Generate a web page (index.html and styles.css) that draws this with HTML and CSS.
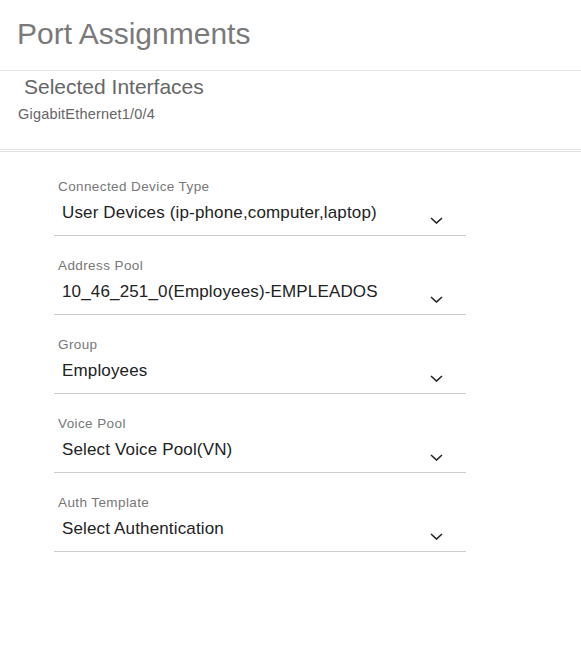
FILE: index.html
```html
<!DOCTYPE html>
<html lang="en">
<head>
  <meta charset="UTF-8" />
  <title>Port Assignments</title>
  <link rel="stylesheet" href="styles.css">
</head>
<body>

  <div class="page-header">
    <h1>Port Assignments</h1>
  </div>

  <div class="interfaces">
    <h2>Selected Interfaces</h2>
    <p>GigabitEthernet1/0/4</p>
  </div>

  <div class="assign-form">
    <div class="field">
      <label>Connected Device Type</label>
      <div class="select-row">
        <span class="value">User Devices (ip-phone,computer,laptop)</span>
        <svg class="chevron" width="13" height="7" viewBox="0 0 13 7"><path d="M1 1 L6.5 6 L12 1" /></svg>
      </div>
    </div>

    <div class="field">
      <label>Address Pool</label>
      <div class="select-row">
        <span class="value">10_46_251_0(Employees)-EMPLEADOS</span>
        <svg class="chevron" width="13" height="7" viewBox="0 0 13 7"><path d="M1 1 L6.5 6 L12 1" /></svg>
      </div>
    </div>

    <div class="field">
      <label>Group</label>
      <div class="select-row">
        <span class="value">Employees</span>
        <svg class="chevron" width="13" height="7" viewBox="0 0 13 7"><path d="M1 1 L6.5 6 L12 1" /></svg>
      </div>
    </div>

    <div class="field">
      <label>Voice Pool</label>
      <div class="select-row">
        <span class="value">Select Voice Pool(VN)</span>
        <svg class="chevron" width="13" height="7" viewBox="0 0 13 7"><path d="M1 1 L6.5 6 L12 1" /></svg>
      </div>
    </div>

    <div class="field">
      <label>Auth Template</label>
      <div class="select-row">
        <span class="value">Select Authentication</span>
        <svg class="chevron" width="13" height="7" viewBox="0 0 13 7"><path d="M1 1 L6.5 6 L12 1" /></svg>
      </div>
    </div>
  </div>

</body>
</html>
```

FILE: styles.css
```css
* {
  box-sizing: border-box;
}

html, body {
  margin: 0;
  padding: 0;
}

body {
  font-family: "Liberation Sans", Arial, sans-serif;
  background: #fff;
  color: #222;
}

/* Header */
.page-header {
  padding: 16px 17px 18px;
  border-bottom: 1px solid #e6e6e6;
}

.page-header h1 {
  margin: 0;
  font-size: 30px;
  line-height: 36px;
  font-weight: normal;
  color: #7a7a7a;
}

/* Selected interfaces */
.interfaces {
  padding: 3px 18px 26px;
  border-bottom: 1px solid #e2e2e2;
  margin-bottom: 1px;
}

.interfaces h2 {
  margin: 0 0 5px 6px;
  font-size: 21px;
  line-height: 26px;
  font-weight: normal;
  color: #666;
}

.interfaces p {
  margin: 0;
  font-size: 14.5px;
  line-height: 18px;
  letter-spacing: 0.2px;
  color: #666;
}

/* Form */
.assign-form {
  border-top: 1px solid #e2e2e2;
  padding: 26px 0 0 54px;
}

.field {
  width: 412px;
  margin-bottom: 21px;
}

.field label {
  display: block;
  padding-left: 4px;
  font-size: 13.5px;
  line-height: 17px;
  letter-spacing: 0.4px;
  color: #777;
}

.select-row {
  display: flex;
  justify-content: space-between;
  align-items: flex-start;
  margin-top: 6px;
  padding: 0 23px 10px 8px;
  border-bottom: 1px solid #ccc;
}

.select-row .value {
  font-size: 17px;
  line-height: 24px;
  letter-spacing: 0.15px;
  color: #222;
}

.chevron {
  margin-top: 16px;
  flex-shrink: 0;
}

.chevron path {
  fill: none;
  stroke: #222;
  stroke-width: 1.6;
}
```
